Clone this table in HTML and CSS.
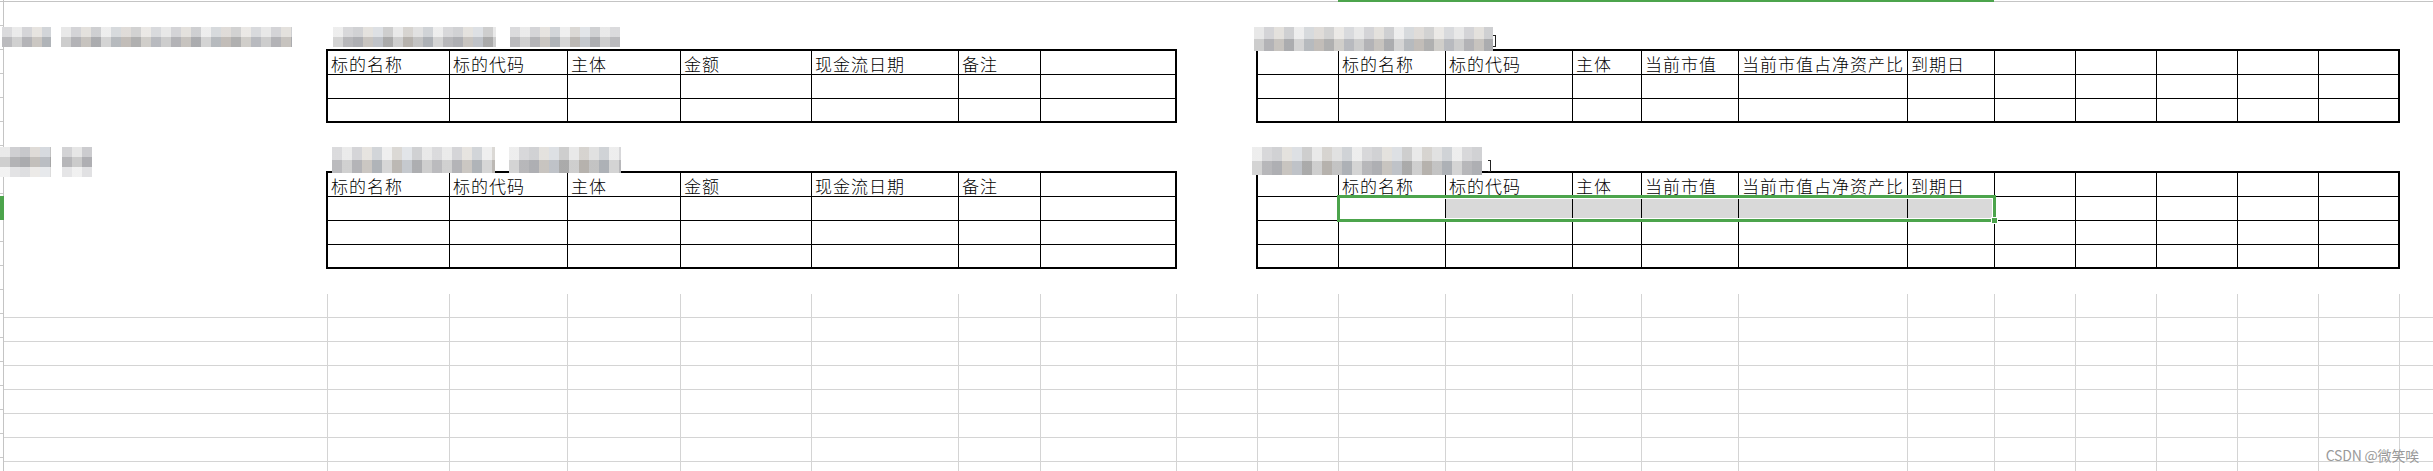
FILE: index.html
```html
<!DOCTYPE html>
<html lang="zh-CN">
<head>
<meta charset="utf-8">
<title>Sheet</title>
<link rel="stylesheet" href="styles.css">
</head>
<body>
<div class="sheet">
  <div class="rowhdr"></div>
  <div class="colhdr"></div>
  <div class="colhdr-sel"></div>
  <div class="rowhdr-sel"></div>

  <div class="tbl tbl-l tbl-1">
    <div class="c">标的名称</div><div class="c">标的代码</div><div class="c">主体</div><div class="c">金额</div><div class="c">现金流日期</div><div class="c">备注</div><div class="c"></div>
    <div class="c"></div><div class="c"></div><div class="c"></div><div class="c"></div><div class="c"></div><div class="c"></div><div class="c"></div>
    <div class="c"></div><div class="c"></div><div class="c"></div><div class="c"></div><div class="c"></div><div class="c"></div><div class="c"></div>
  </div>

  <div class="tbl tbl-l tbl-2">
    <div class="c">标的名称</div><div class="c">标的代码</div><div class="c">主体</div><div class="c">金额</div><div class="c">现金流日期</div><div class="c">备注</div><div class="c"></div>
    <div class="c"></div><div class="c"></div><div class="c"></div><div class="c"></div><div class="c"></div><div class="c"></div><div class="c"></div>
    <div class="c"></div><div class="c"></div><div class="c"></div><div class="c"></div><div class="c"></div><div class="c"></div><div class="c"></div>
    <div class="c"></div><div class="c"></div><div class="c"></div><div class="c"></div><div class="c"></div><div class="c"></div><div class="c"></div>
  </div>

  <div class="tbl tbl-r tbl-3">
    <div class="c"></div><div class="c">标的名称</div><div class="c">标的代码</div><div class="c">主体</div><div class="c">当前市值</div><div class="c">当前市值占净资产比</div><div class="c">到期日</div><div class="c"></div><div class="c"></div><div class="c"></div><div class="c"></div><div class="c"></div>
    <div class="c"></div><div class="c"></div><div class="c"></div><div class="c"></div><div class="c"></div><div class="c"></div><div class="c"></div><div class="c"></div><div class="c"></div><div class="c"></div><div class="c"></div><div class="c"></div>
    <div class="c"></div><div class="c"></div><div class="c"></div><div class="c"></div><div class="c"></div><div class="c"></div><div class="c"></div><div class="c"></div><div class="c"></div><div class="c"></div><div class="c"></div><div class="c"></div>
  </div>

  <div class="tbl tbl-r tbl-4">
    <div class="c"></div><div class="c">标的名称</div><div class="c">标的代码</div><div class="c">主体</div><div class="c">当前市值</div><div class="c">当前市值占净资产比</div><div class="c">到期日</div><div class="c"></div><div class="c"></div><div class="c"></div><div class="c"></div><div class="c"></div>
    <div class="c"></div><div class="c"></div><div class="c hl"></div><div class="c hl"></div><div class="c hl"></div><div class="c hl"></div><div class="c hl"></div><div class="c"></div><div class="c"></div><div class="c"></div><div class="c"></div><div class="c"></div>
    <div class="c"></div><div class="c"></div><div class="c"></div><div class="c"></div><div class="c"></div><div class="c"></div><div class="c"></div><div class="c"></div><div class="c"></div><div class="c"></div><div class="c"></div><div class="c"></div>
    <div class="c"></div><div class="c"></div><div class="c"></div><div class="c"></div><div class="c"></div><div class="c"></div><div class="c"></div><div class="c"></div><div class="c"></div><div class="c"></div><div class="c"></div><div class="c"></div>
  </div>

  <div class="lbl lbl-a1"><span class="mz mz-a w49"></span><span class="mz mz-b w231"></span></div>
  <div class="lbl lbl-t1"><span class="mz mz-c w163"></span><span class="mz mz-a w110"></span></div>
  <div class="lbl lbl-t3"><span class="mz mz-b w239 tall"></span><span class="brk"></span></div>

  <div class="lbl lbl-a2"><span class="mz mz-c w51 tri"></span><span class="mz mz-a w30 tri"></span></div>
  <div class="lbl lbl-t2"><span class="mz mz-a w163 tall2"></span><span class="mz mz-c w112 tall2"></span></div>
  <div class="lbl lbl-t4"><span class="mz mz-c w230 tall3"></span><span class="brk brk2"></span></div>

  <div class="sel"><span class="handle"></span></div>

  <div class="g g-a"></div>
  <div class="g"></div><div class="g"></div><div class="g"></div><div class="g"></div><div class="g"></div><div class="g"></div><div class="g"></div>
  <div class="g"></div><div class="g"></div><div class="g"></div><div class="g"></div><div class="g"></div><div class="g"></div><div class="g"></div>
  <div class="g"></div><div class="g"></div><div class="g"></div><div class="g"></div><div class="g"></div><div class="g"></div><div class="g"></div>
</div>
<div class="wm">CSDN @微笑唉</div>
</body>
</html>
```

FILE: styles.css
```css
html, body {
  margin: 0;
  padding: 0;
  background: #fff;
}
body {
  width: 2433px;
  height: 471px;
  overflow: hidden;
  position: relative;
  font-family: "Noto Sans CJK SC", "Noto Sans", sans-serif;
  color: #000;
}

.sheet {
  display: grid;
  grid-template-columns: 4px 323px 122px 118px 113px 131px 147px 82px 136px 81px 81px 107px 127px 69px 97px 169px 87px 81px 81px 81px 81px 81px 34px;
  grid-template-rows: 2px 24px 24px 24px 24px 24px 24px 26px 24px 24px 24px 24px 26px repeat(8, 24px);
  width: 2433px;
}

/* frame edges */
.rowhdr {
  grid-column: 1;
  grid-row: 1 / -1;
  border-right: 1px solid #c4c4c4;
  background: repeating-linear-gradient(to bottom, transparent 0 23px, #c8c8c8 23px 24px);
  background-position: 0 2px;
}
.colhdr {
  grid-column: 1 / -1;
  grid-row: 1;
  border-bottom: 1px solid #c4c4c4;
}
.colhdr-sel {
  grid-column: 12 / 18;
  grid-row: 1;
  background: #4ca44c;
  z-index: 2;
}
.rowhdr-sel {
  grid-column: 1;
  grid-row: 10;
  background: #4ca44c;
  z-index: 2;
}

/* lower gridlines */
.g {
  grid-row: 14 / -1;
  border-left: 1px solid #d4d4d4;
  background: repeating-linear-gradient(to bottom, transparent 0 23px, #d4d4d4 23px 24px);
}
.g-a {
  border-left: 0;
}

/* bordered tables */
.tbl {
  display: grid;
  border: 2px solid #000;
  margin: -1px;
  background: #fff;
  z-index: 1;
}
.tbl-l {
  grid-column: 3 / 10;
  grid-template-columns: 122px 118px 113px 131px 147px 82px 1fr;
}
.tbl-r {
  grid-column: 11 / 23;
  grid-template-columns: 81px 107px 127px 69px 97px 169px 87px 81px 81px 81px 81px 1fr;
}
.tbl-1 { grid-row: 4 / 7; grid-template-rows: 24px 24px 1fr; }
.tbl-2 { grid-row: 9 / 13; grid-template-rows: 24px 24px 24px 1fr; }
.tbl-3 { grid-row: 4 / 7; grid-template-rows: 24px 24px 1fr; }
.tbl-4 { grid-row: 9 / 13; grid-template-rows: 24px 24px 24px 1fr; }

.c {
  border-right: 1px solid #000;
  border-bottom: 1px solid #000;
  display: flex;
  align-items: flex-end;
  overflow: hidden;
  white-space: nowrap;
  padding-left: 3px;
  font-size: 17px;
  line-height: 20px;
  letter-spacing: 1px;
  font-weight: 300;
  min-width: 0;
}
.tbl-l > .c:nth-child(7n) { border-right: 0; }
.tbl-r > .c:nth-child(12n) { border-right: 0; }
.tbl-1 > .c:nth-last-child(-n+7),
.tbl-2 > .c:nth-last-child(-n+7) { border-bottom: 0; }
.tbl-3 > .c:nth-last-child(-n+12),
.tbl-4 > .c:nth-last-child(-n+12) { border-bottom: 0; }
.c.hl { background: #d9d9d9; }

/* selection overlay */
.sel {
  grid-column: 12 / 18;
  grid-row: 10;
  margin: -1px -2px -2px -1px;
  border: 3px solid #4ca44c;
  box-shadow: inset 0 0 0 1px #fff;
  position: relative;
  z-index: 3;
}
.handle {
  position: absolute;
  right: -5px;
  bottom: -5px;
  width: 7px;
  height: 7px;
  box-sizing: border-box;
  background: #4ca44c;
  border: 1px solid #fff;
}

/* blurred labels */
.lbl {
  display: flex;
  align-items: flex-start;
  z-index: 4;
}
.lbl-a1 { grid-column: 2; grid-row: 3; padding-top: 1px; margin-left: -2px; gap: 10px; }
.lbl-t1 { grid-column: 3 / 8; grid-row: 3; padding-top: 1px; padding-left: 6px; gap: 14px; }
.lbl-t3 { grid-column: 11 / 17; grid-row: 3; padding-top: 1px; margin-left: -3px; gap: 0; }
.lbl-a2 { grid-column: 2; grid-row: 8; padding-top: 1px; margin-left: -4px; gap: 11px; }
.lbl-t2 { grid-column: 3 / 8; grid-row: 8; padding-top: 1px; padding-left: 5px; gap: 14px; }
.lbl-t4 { grid-column: 11 / 17; grid-row: 8; padding-top: 1px; margin-left: -5px; gap: 6px; }

.mz {
  display: block;
  height: 20px;
  flex: none;
  filter: blur(0.6px);
  background-image:
    linear-gradient(to bottom, rgba(255,255,255,0.3) 0 50%, rgba(0,0,0,0.08) 50% 100%),
    var(--pal);
  background-size: 100% 100%, 100px 100%;
}
.mz.tall { height: 24px; }
.mz.tall2 { height: 26px; }
.mz.tall3 { height: 28px; }
.mz.tri {
  height: 30px;
  background-image:
    linear-gradient(to bottom, rgba(255,255,255,0.15) 0 35%, rgba(0,0,0,0.1) 35% 68%, rgba(255,255,255,0.5) 68% 100%),
    var(--pal);
}
.mz-a {
  --pal: linear-gradient(90deg, #cbcbce 0 10px, #e2e2e2 10px 20px, #c3c3c7 20px 30px, #dcd8d3 30px 40px, #bfc3c8 40px 50px, #e8e8e8 50px 60px, #ccc8c3 60px 70px, #d6dadf 70px 80px, #bcbdc0 80px 90px, #dfdfdf 90px 100px);
}
.mz-b {
  --pal: linear-gradient(90deg, #dedede 0 10px, #c2c2c6 10px 20px, #d8d4cf 20px 30px, #babbbe 30px 40px, #e6e6e6 40px 50px, #c6cace 50px 60px, #d2cdc8 60px 70px, #bfbfbf 70px 80px, #e2dfdb 80px 90px, #c8cacf 90px 100px);
}
.mz-c {
  --pal: linear-gradient(90deg, #e6e6e6 0 10px, #c7c7ca 10px 20px, #bdbec2 20px 30px, #d9d5d0 30px 40px, #cfd3d9 40px 50px, #b9b9b9 50px 60px, #e0e0e0 60px 70px, #c5c1bc 70px 80px, #d4d4d4 80px 90px, #bcc0c5 90px 100px);
}
.w30 { width: 30px; }
.w49 { width: 49px; }
.w51 { width: 51px; }
.w110 { width: 110px; }
.w112 { width: 112px; }
.w163 { width: 163px; }
.w230 { width: 230px; }
.w231 { width: 231px; }
.w239 { width: 239px; }

.brk {
  display: block;
  width: 3px;
  height: 12px;
  margin-top: 8px;
  border-right: 1px solid #222;
  border-top: 1px solid #222;
  border-bottom: 1px solid #222;
  box-sizing: border-box;
}
.brk2 { margin-top: 13px; }

/* watermark */
.wm {
  position: absolute;
  right: 14px;
  bottom: 8px;
  font-size: 14px;
  line-height: 16px;
  color: #9a9a9a;
  font-family: "Noto Sans CJK SC", "Noto Sans", sans-serif;
  letter-spacing: -0.2px;
}
```
